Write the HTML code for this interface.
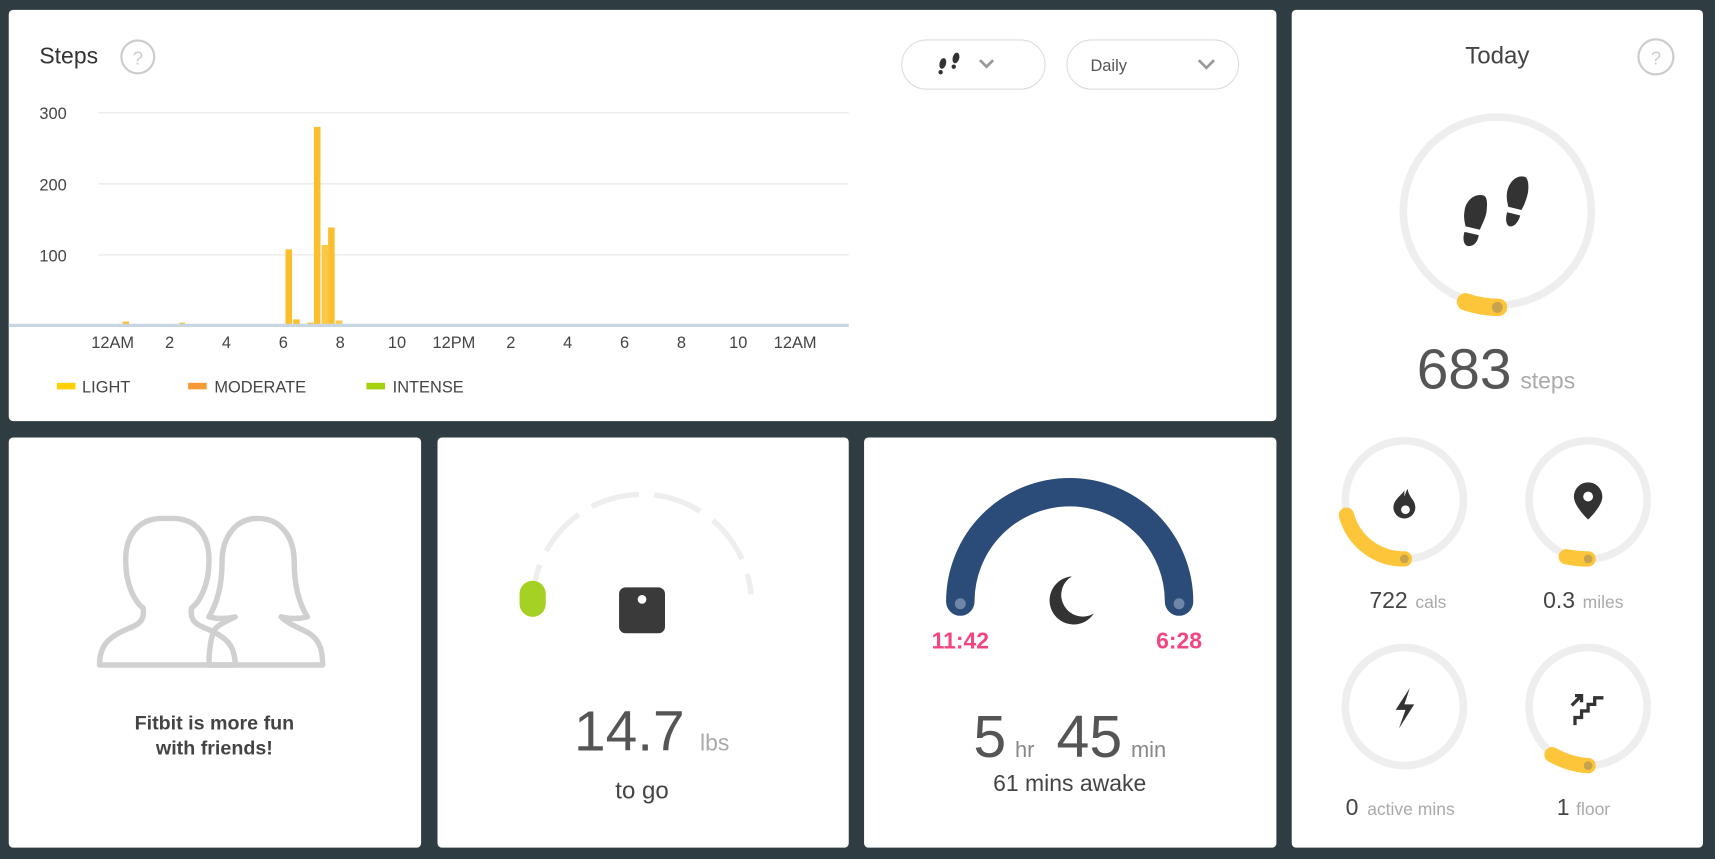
<!DOCTYPE html>
<html><head><meta charset="utf-8"><style>
*{margin:0;padding:0;box-sizing:border-box}
body{width:1715px;height:859px;background:#2f3d43;overflow:hidden;font-family:"Liberation Sans",sans-serif;color:#333}
#w{position:absolute;left:0;top:0;width:1568px;height:785px;transform:scale(1.09375);transform-origin:0 0}
.card{position:absolute;background:#fff;border-radius:4px}
.abs{position:absolute}
</style></head><body><div id="w">
<div class="card" style="left:8px;top:9px;width:1159px;height:376px"></div>
<div class="card" style="left:1181px;top:9px;width:376px;height:766px"></div>
<div class="card" style="left:8px;top:400px;width:377px;height:375px"></div>
<div class="card" style="left:400px;top:400px;width:376px;height:375px"></div>
<div class="card" style="left:790px;top:400px;width:377px;height:375px"></div>

<svg class="abs" style="left:0;top:0" width="1568" height="785" font-family="Liberation Sans, sans-serif">
<text x="36" y="58" font-size="21" fill="#333">Steps</text>
<circle cx="126" cy="52" r="15" fill="none" stroke="#ccc" stroke-width="2"/>
<text x="126" y="59" font-size="17" fill="#ccc" text-anchor="middle">?</text>
<rect x="824.5" y="36.5" width="131" height="45" rx="22.5" fill="#fff" stroke="#ddd"/>
<g fill="#333"><ellipse cx="862" cy="58" rx="3" ry="5" transform="rotate(15 862 58)"/><ellipse cx="874" cy="53" rx="3" ry="5" transform="rotate(15 874 53)"/><circle cx="860" cy="66" r="2"/><circle cx="872" cy="61" r="2"/></g>
<path d="M896 55l6 6 6-6" fill="none" stroke="#999" stroke-width="2.5"/>
<rect x="975.5" y="36.5" width="157" height="45" rx="22.5" fill="#fff" stroke="#ddd"/>
<text x="997" y="65" font-size="15" fill="#555">Daily</text>
<path d="M1096 55l7 7 7-7" fill="none" stroke="#999" stroke-width="2.5"/>
<g stroke="#eee" stroke-width="1.5"><line x1="90" y1="103" x2="776" y2="103"/><line x1="90" y1="168" x2="776" y2="168"/><line x1="90" y1="233" x2="776" y2="233"/></g>
<g font-size="15" fill="#444"><text x="36" y="109">300</text><text x="36" y="174">200</text><text x="36" y="239">100</text></g>
<g fill="#fbbf2e">
<rect x="112" y="294" width="6" height="4"/><rect x="164" y="295" width="5" height="3"/>
<rect x="261" y="228" width="6" height="70"/><rect x="268" y="292" width="6" height="6"/><rect x="281" y="295" width="6" height="3"/>
<rect x="287" y="116" width="6" height="182"/><rect x="294" y="224" width="6" height="74" fill="#fcc84a"/><rect x="300" y="208" width="6" height="90"/><rect x="307" y="293" width="6" height="5" fill="#fcc84a"/>
</g>
<rect x="8" y="296" width="768" height="3" fill="#c8d6e2"/>
<g font-size="15" fill="#444" text-anchor="middle">
<text x="103" y="318">12AM</text><text x="155" y="318">2</text><text x="207" y="318">4</text><text x="259" y="318">6</text><text x="311" y="318">8</text><text x="363" y="318">10</text><text x="415" y="318">12PM</text><text x="467" y="318">2</text><text x="519" y="318">4</text><text x="571" y="318">6</text><text x="623" y="318">8</text><text x="675" y="318">10</text><text x="727" y="318">12AM</text>
</g>
<rect x="52" y="350" width="17" height="6" fill="#ffd100"/><text x="75" y="359" font-size="15" fill="#444">LIGHT</text>
<rect x="172" y="350" width="17" height="6" fill="#f59a34"/><text x="196" y="359" font-size="15" fill="#444">MODERATE</text>
<rect x="335" y="350" width="17" height="6" fill="#a5d20f"/><text x="359" y="359" font-size="15" fill="#444">INTENSE</text>

<text x="1369" y="58" font-size="22" fill="#444" text-anchor="middle">Today</text>
<circle cx="1514" cy="52" r="16" fill="none" stroke="#ccc" stroke-width="2"/>
<text x="1514" y="59" font-size="17" fill="#ccc" text-anchor="middle">?</text>
<circle cx="1369" cy="193" r="86" fill="none" stroke="#eee" stroke-width="7"/>
<path d="M1340 276 Q1355 281 1370 281" fill="none" stroke="#fdc53a" stroke-width="16" stroke-linecap="round"/>
<circle cx="1369" cy="281" r="5" fill="#c7a34e"/>
<g fill="#333">
<path d="M1357 179c-8-3-17 4-18 14-1 5 0 10 1 14l13 3c2-5 5-10 6-16 1-7 1-13-2-15z"/>
<path d="M1339 212l13 3c-1 6-4 10-9 10s-6-7-4-13z"/>
<path d="M1395 162c-7-3-15 3-17 13-1 5 0 10 1 14l12 3c3-5 5-11 6-16 1-7 0-12-2-14z"/>
<path d="M1378 194l12 3c-2 6-5 10-9 10s-5-7-3-13z"/>
</g>
<text x="1382" y="355" font-size="52" fill="#555" text-anchor="end">683</text>
<text x="1390" y="355" font-size="21" fill="#aaa">steps</text>

<g fill="none" stroke="#eee" stroke-width="7">
<circle cx="1284" cy="457" r="54"/><circle cx="1452" cy="457" r="54"/><circle cx="1284" cy="646" r="54"/><circle cx="1452" cy="646" r="54"/>
</g>
<g fill="none" stroke="#fdc53a" stroke-width="14" stroke-linecap="round">
<path d="M1231 471 A54 54 0 0 0 1284 511"/>
<path d="M1432 509 Q1442 511 1452 511"/>
<path d="M1419 690 Q1435 699 1452 700"/>
</g>
<g fill="#c7a34e"><circle cx="1284" cy="511" r="4"/><circle cx="1452" cy="511" r="4"/><circle cx="1452" cy="700" r="4"/></g>
<path d="M1284 448c-1 4-10 8-10 16a10 10 0 0 0 20 0c0-7-6-9-7-17c-2 3-2 5-3 7z" fill="#333"/><circle cx="1285" cy="466" r="4" fill="#fff"/>
<path d="M1452 441a13 13 0 0 0-13 13c0 9 13 21 13 21s13-12 13-21a13 13 0 0 0-13-13z" fill="#333"/><circle cx="1452" cy="454" r="4.5" fill="#fff"/>
<path d="M1289 629l-13 20h9l-6 17 14-22h-9z" fill="#333"/>
<path d="M1440 663v-7h6v-6h6v-6h6v-6h8" fill="none" stroke="#333" stroke-width="3"/>
<path d="M1437 645l9-9m-6 0h6v6" fill="none" stroke="#333" stroke-width="3"/>

<text x="1287" y="556" font-size="21" fill="#444" text-anchor="end">722</text><text x="1294" y="556" font-size="16" fill="#aaa">cals</text>
<text x="1440" y="556" font-size="21" fill="#444" text-anchor="end">0.3</text><text x="1447" y="556" font-size="16" fill="#aaa">miles</text>
<text x="1242" y="745" font-size="21" fill="#444" text-anchor="end">0</text><text x="1250" y="745" font-size="16" fill="#aaa">active mins</text>
<text x="1435" y="745" font-size="21" fill="#444" text-anchor="end">1</text><text x="1441" y="745" font-size="16" fill="#aaa">floor</text>

<g fill="none" stroke="#d0d0d0" stroke-width="5" stroke-linejoin="round">
<path d="M148 474c-20 0-34 14-33 40 0 20 8 36 16 42 1 10-2 14-12 18-20 8-28 16-28 34h124c0-18-8-26-28-34-10-4-13-8-12-18 8-6 16-22 16-42 1-26-13-40-33-40z"/>
<path d="M236 474c-20 0-33 16-33 40 0 24-6 40-12 50 8 2 16 2 24 0-8 4-18 8-20 14-2 6-4 14-4 30h104c0-16-4-24-14-30-8-4-18-8-24-14 8 2 16 2 24 0-6-10-12-26-12-50 0-24-13-40-33-40z"/>
</g>
<text x="196" y="667" font-size="18" fill="#444" font-weight="bold" text-anchor="middle">Fitbit is more fun</text>
<text x="196" y="690" font-size="18" fill="#444" font-weight="bold" text-anchor="middle">with friends!</text>

<path d="M487 552 A100 100 0 0 1 687 552" fill="none" stroke="#eee" stroke-width="5" stroke-dasharray="45 14" transform="rotate(-5 587 552)"/>
<rect x="475" y="531" width="24" height="33" rx="12" fill="#a5d125"/>
<rect x="566" y="537" width="42" height="42" rx="6" fill="#3a3a3a"/><circle cx="587" cy="548" r="4" fill="#fff"/>
<text x="626" y="686" font-size="52" fill="#555" text-anchor="end">14.7</text>
<text x="640" y="686" font-size="21" fill="#aaa">lbs</text>
<text x="587" y="730" font-size="22" fill="#444" text-anchor="middle">to go</text>

<path d="M878 550 A100 100 0 0 1 1078 550" fill="none" stroke="#2b4b78" stroke-width="26" stroke-linecap="round"/>
<circle cx="878" cy="552" r="5" fill="#6e87a8"/><circle cx="1078" cy="552" r="5" fill="#6e87a8"/>
<path d="M980 527a22 22 0 1 0 20 34a18 18 0 0 1-20-34z" fill="#333"/>
<text x="878" y="593" font-size="21" fill="#f4457f" font-weight="bold" text-anchor="middle">11:42</text>
<text x="1078" y="593" font-size="21" fill="#f4457f" font-weight="bold" text-anchor="middle">6:28</text>
<text x="920" y="692" font-size="54" fill="#555" text-anchor="end">5</text>
<text x="928" y="692" font-size="20" fill="#888">hr</text>
<text x="1026" y="692" font-size="54" fill="#555" text-anchor="end">45</text>
<text x="1034" y="692" font-size="20" fill="#888">min</text>
<text x="978" y="723" font-size="21" fill="#444" text-anchor="middle">61 mins awake</text>
</svg>
</div></body></html>
